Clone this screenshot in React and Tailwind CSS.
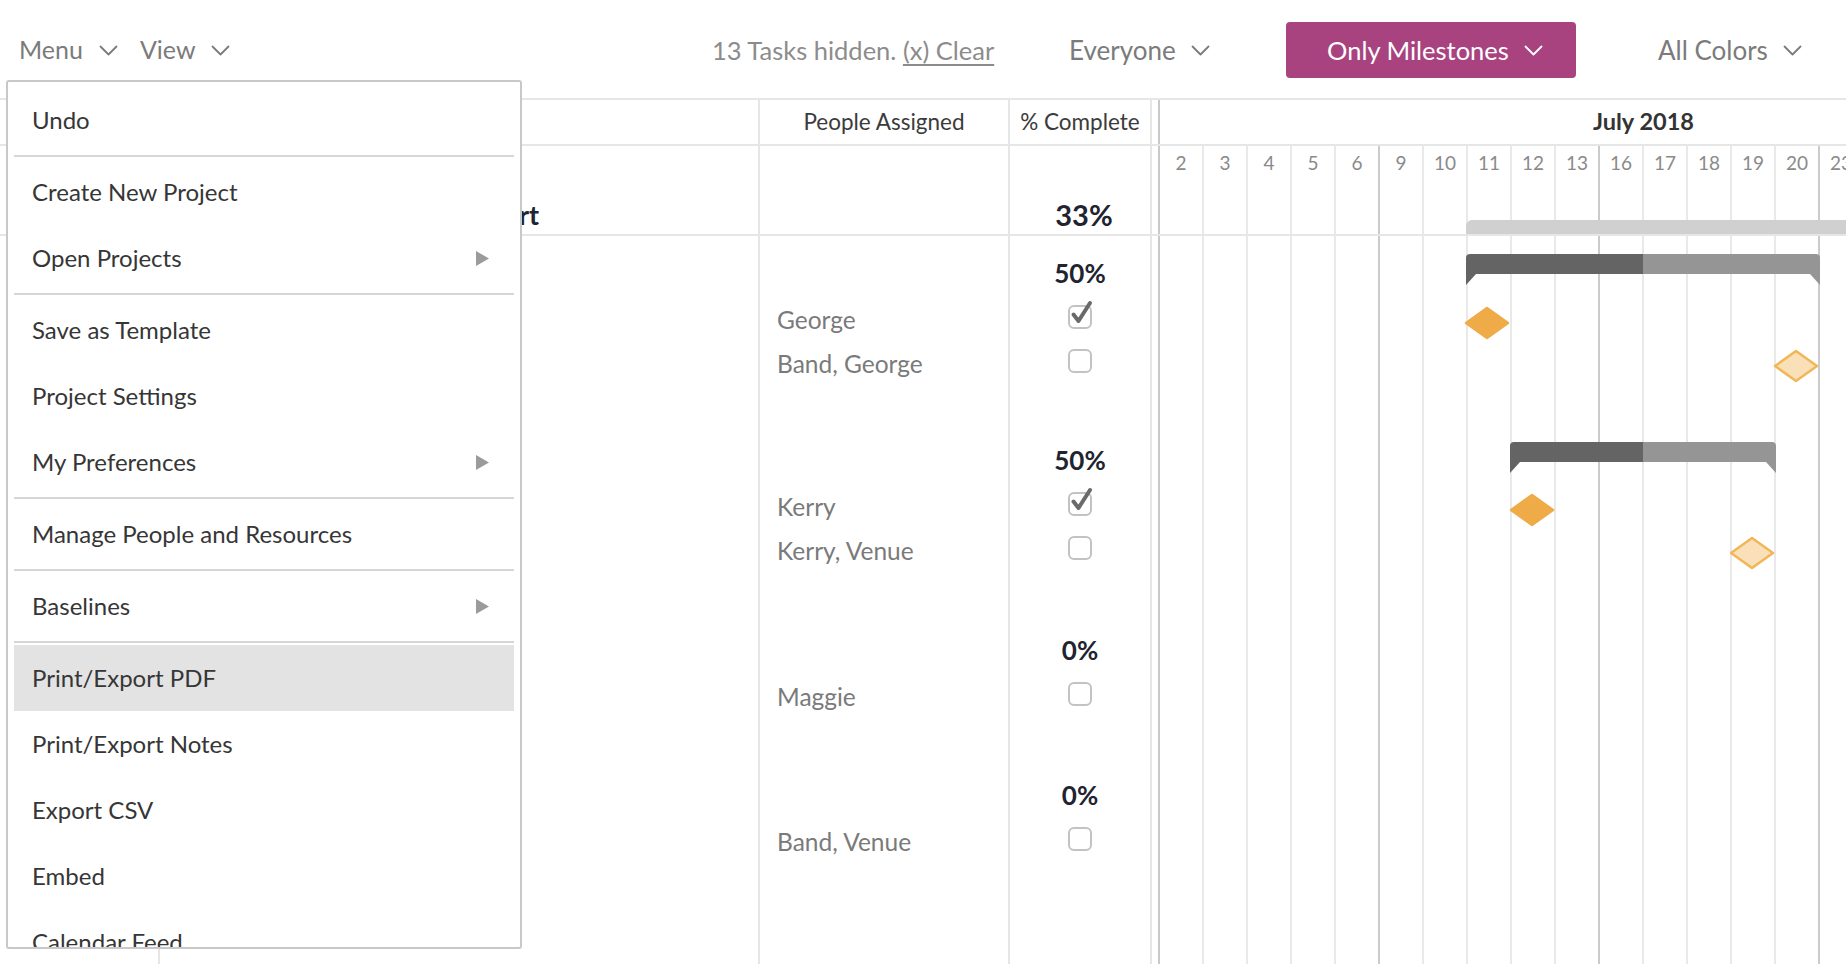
import React from 'react';

const menuGroups = [
  [{ label: 'Undo' }],
  [{ label: 'Create New Project' }, { label: 'Open Projects', sub: true }],
  [{ label: 'Save as Template' }, { label: 'Project Settings' }, { label: 'My Preferences', sub: true }],
  [{ label: 'Manage People and Resources' }],
  [{ label: 'Baselines', sub: true }],
  [
    { label: 'Print/Export PDF', active: true },
    { label: 'Print/Export Notes' },
    { label: 'Export CSV' },
    { label: 'Embed' },
    { label: 'Calendar Feed' },
  ],
];

const days = [
  { d: 2 }, { d: 3 }, { d: 4 }, { d: 5 }, { d: 6, wk: true },
  { d: 9 }, { d: 10 }, { d: 11 }, { d: 12 }, { d: 13, wk: true },
  { d: 16 }, { d: 17 }, { d: 18 }, { d: 19 }, { d: 20, wk: true },
  { d: 23 },
];

const groups = [
  { pct: '50%', mt: 'mt-[12px]', rows: [{ name: 'George', done: true }, { name: 'Band, George' }] },
  { pct: '50%', mt: 'mt-[49px]', rows: [{ name: 'Kerry', done: true }, { name: 'Kerry, Venue' }] },
  { pct: '0%', mt: 'mt-[52px]', rows: [{ name: 'Maggie' }] },
  { pct: '0%', mt: 'mt-[51px]', rows: [{ name: 'Band, Venue' }] },
];

// positions on the timeline canvas (px from its left / from body top)
const bars = [
  { left: 306, top: 18, width: 354, done: 177 },
  { left: 350, top: 206, width: 266, done: 133 },
];

const milestones = [
  { cx: 327, cy: 87, filled: true },
  { cx: 636, cy: 130 },
  { cx: 372, cy: 274, filled: true },
  { cx: 592, cy: 317 },
];

const Chevron = ({ className = '' }) => (
  <svg width="19" height="11" viewBox="0 0 19 11" className={className} fill="none" stroke="currentColor" strokeWidth="1.8" strokeLinecap="round" strokeLinejoin="round">
    <polyline points="1.5,1.5 9.5,9.5 17.5,1.5" />
  </svg>
);

const SubArrow = () => (
  <svg width="13" height="15" viewBox="0 0 13 15">
    <polygon points="0,0 13,7.5 0,15" fill="#9b9b9b" />
  </svg>
);

const Checkbox = ({ checked }) => (
  <svg width="28" height="30" viewBox="0 0 28 30" className="mb-[10px]">
    <rect x="3" y="6" width="22" height="22" rx="5" fill="white" stroke="#c2c2c2" strokeWidth="2" />
    {checked && (
      <path d="M7.5 14.5 L12.5 21 L24 3" fill="none" stroke="#6a6a6a" strokeWidth="4" strokeLinecap="round" strokeLinejoin="round" />
    )}
  </svg>
);

const Diamond = ({ cx, cy, filled }) => (
  <svg width="46" height="34" viewBox="0 0 46 34" className="absolute" style={{ left: cx - 23, top: cy - 17 }}>
    <polygon
      points="23,2 44,17 23,32 2,17"
      fill={filled ? '#eeab47' : '#fae0b9'}
      stroke={filled ? '#eeab47' : '#f1b757'}
      strokeWidth="2.5"
      strokeLinejoin="round"
    />
  </svg>
);

const SummaryBar = ({ left, top, width, done }) => (
  <div className="absolute" style={{ left, top, width }}>
    <div className="flex h-[20px] overflow-hidden rounded-t-[4px]">
      <div className="h-full bg-[#646464]" style={{ width: done }} />
      <div className="h-full flex-1 bg-[#959595]" />
    </div>
    <svg width="10" height="11" className="absolute left-0 top-[20px]">
      <polygon points="0,0 10,0 0,11" fill="#646464" />
    </svg>
    <svg width="10" height="11" className="absolute right-0 top-[20px]">
      <polygon points="0,0 10,0 10,11" fill="#959595" />
    </svg>
  </div>
);

const DayColumns = ({ label }) =>
  days.map((day) => (
    <div
      key={day.d}
      className={`h-full w-[44px] flex-none border-r-2 ${day.wk ? 'border-[#cbcbcb]' : 'border-[#e9e9e9]'}`}
    >
      {label && <div className="pt-[7px] text-center text-[19px] leading-none text-[#8a8a8a]">{day.d}</div>}
    </div>
  ));

const Row = ({ className, cells }) => (
  <div className={`flex ${className}`}>
    <div className="h-full w-[160px] flex-none border-r-2 border-[#e6e6e6]">{cells[0]}</div>
    <div className="h-full w-[600px] flex-none border-r-2 border-[#e6e6e6]">{cells[1]}</div>
    <div className="h-full w-[250px] flex-none border-r-2 border-[#e6e6e6]">{cells[2]}</div>
    <div className="h-full w-[142px] flex-none border-r-2 border-[#e6e6e6]">{cells[3]}</div>
    <div className="h-full w-[8px] flex-none border-r-2 border-[#c9c9c9]" />
    <div className="relative flex h-full flex-1 overflow-hidden">{cells[4]}</div>
  </div>
);

const TopBar = () => (
  <div className="flex h-[98px] items-center pt-[2px] text-[26px] text-[#7b7b7b]">
    <div className="flex w-[712px] flex-none items-center pl-[19px] text-[25px]">
      <span>Menu</span>
      <Chevron className="ml-[16px]" />
      <span className="ml-[22px]">View</span>
      <Chevron className="ml-[15px]" />
    </div>
    <div className="w-[357px] flex-none text-[25.5px] text-[#8c8c8c]">
      13 Tasks hidden. <span className="underline underline-offset-4">(x) Clear</span>
    </div>
    <div className="flex w-[217px] flex-none items-center">
      <span>Everyone</span>
      <Chevron className="ml-[15px]" />
    </div>
    <button className="flex h-[56px] w-[290px] flex-none items-center rounded-[4px] bg-[#a8437f] pl-[41px] text-[25.5px] text-white">
      <span>Only Milestones</span>
      <Chevron className="ml-[15px]" />
    </button>
    <div className="ml-[82px] flex items-center">
      <span>All Colors</span>
      <Chevron className="ml-[15px]" />
    </div>
  </div>
);

const MainMenu = () => (
  <div className="absolute left-[6px] top-[80px] h-[869px] w-[516px] overflow-hidden rounded-[3px] border-2 border-[#c8c8c8] bg-white pt-[5px] text-[24px] text-[#363636]">
    {menuGroups.map((group, gi) => (
      <div key={gi}>
        {gi > 0 && <div className="mx-[6px] my-[2px] h-[2px] bg-[#d6d6d6]" />}
        {group.map((item) => (
          <div
            key={item.label}
            className={`mx-[6px] flex h-[66px] items-center justify-between pl-[18px] pr-[25px] ${item.active ? 'bg-[#e3e3e3]' : ''}`}
          >
            <span>{item.label}</span>
            {item.sub && <SubArrow />}
          </div>
        ))}
      </div>
    ))}
  </div>
);

const Table = () => (
  <div>
    <Row
      className="h-[48px] border-y-2 border-[#e6e6e6] text-[22.5px] text-[#3b3b3b]"
      cells={[
        null,
        null,
        <div className="flex h-full items-center justify-center">People Assigned</div>,
        <div className="flex h-full items-center justify-center">% Complete</div>,
        <div className="flex h-full items-center pl-[433px] text-[23.5px] font-bold text-[#333]">July 2018</div>,
      ]}
    />
    <Row
      className="h-[90px] border-b-2 border-[#e6e6e6]"
      cells={[
        null,
        <div className="flex h-full items-end pb-[6px]">
          <div className="w-[379px] text-right text-[27px] font-bold leading-none text-[#1f2430]">Band Concert</div>
        </div>,
        null,
        <div className="flex h-full items-end justify-center pb-[5px] pl-[8px] text-[29px] font-bold leading-none text-[#1f2430]">33%</div>,
        <>
          <DayColumns label />
          <div className="absolute bottom-0 left-[306px] right-0 h-[14px] rounded-tl-[6px] bg-[#d0d0d0]" />
        </>,
      ]}
    />
    <Row
      className="h-[728px]"
      cells={[
        null,
        null,
        <div className="text-[24.5px] text-[#7a7a7a]">
          {groups.map((g, i) => (
            <div key={i} className={g.mt}>
              <div className="h-[50px]" />
              {g.rows.map((r) => (
                <div key={r.name} className="flex h-[44px] items-center pl-[17px]">{r.name}</div>
              ))}
            </div>
          ))}
        </div>,
        <div>
          {groups.map((g, i) => (
            <div key={i} className={g.mt}>
              <div className="flex h-[50px] items-center justify-center text-[26px] font-bold text-[#1f2430]">{g.pct}</div>
              {g.rows.map((r) => (
                <div key={r.name} className="flex h-[44px] items-center justify-center">
                  <Checkbox checked={r.done} />
                </div>
              ))}
            </div>
          ))}
        </div>,
        <>
          <DayColumns />
          {bars.map((b, i) => (
            <SummaryBar key={i} {...b} />
          ))}
          {milestones.map((m, i) => (
            <Diamond key={i} {...m} />
          ))}
        </>,
      ]}
    />
  </div>
);

export default function App() {
  return (
    <div className="relative h-[964px] w-[1846px] overflow-hidden bg-white font-['Lato','Liberation_Sans',sans-serif]">
      <TopBar />
      <Table />
      <MainMenu />
    </div>
  );
}
